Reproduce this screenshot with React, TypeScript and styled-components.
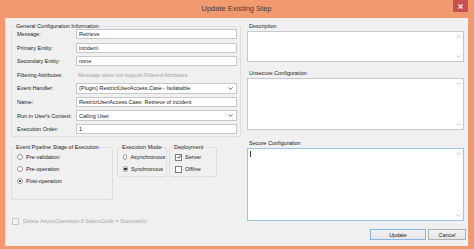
import React from 'react';
import styled, { createGlobalStyle } from 'styled-components';

const GlobalStyle = createGlobalStyle`
  html, body {
    margin: 0;
    padding: 0;
    background: #f19a70;
  }
  body {
    font-family: "Liberation Sans", Arial, sans-serif;
  }
`;

const Window = styled.div`
  width: 474px;
  height: 249px;
  background: #f19a70;
  display: flex;
  flex-direction: column;
  box-sizing: border-box;
  padding: 0 6px 3px 5px;
`;

const TitleBar = styled.div`
  height: 18px;
  display: grid;
  grid-template-columns: 1fr auto 1fr;
  align-items: start;
`;

const Title = styled.div`
  grid-column: 2;
  font-size: 7.5px;
  line-height: 18px;
  color: #4a3b34;
`;

const CloseButton = styled.div`
  grid-column: 3;
  justify-self: end;
  width: 15px;
  height: 12px;
  background: #c75050;
  display: flex;
  align-items: center;
  justify-content: center;
`;

const Client = styled.div`
  flex: 1;
  background: #f0f0f0;
  display: flex;
  padding: 5px 2px 0 6px;
  gap: 6px;
  font-size: 5.5px;
  color: #222;
`;

const LeftColumn = styled.div`
  width: 230px;
  display: flex;
  flex-direction: column;
`;

const RightColumn = styled.div`
  width: 219px;
  display: flex;
  flex-direction: column;
`;

const Group = styled.fieldset<{ $width?: number; $padBottom?: number }>`
  margin: 0;
  min-width: 0;
  box-sizing: border-box;
  width: ${(p) => (p.$width ? `${p.$width}px` : 'auto')};
  border: 1px solid #dedede;
  border-radius: 2px;
  padding: 0 3px ${(p) => p.$padBottom ?? 2}px 5px;
`;

const Legend = styled.legend`
  font-size: 5.5px;
  line-height: 6px;
  padding: 0 1px;
  margin-left: -2px;
  color: #222;
  white-space: nowrap;
`;

const FormGrid = styled.div`
  display: grid;
  grid-template-columns: 59px 161px;
  grid-auto-rows: 10px;
  row-gap: 3.6px;
  align-items: center;
`;

const FieldLabel = styled.div`
  white-space: nowrap;
`;

const TextBox = styled.div`
  height: 10px;
  box-sizing: border-box;
  border: 1px solid #c8c8c8;
  background: #fff;
  padding-left: 2px;
  display: flex;
  align-items: center;
  white-space: nowrap;
`;

const ComboBox = styled(TextBox)`
  height: 11px;
  justify-content: space-between;
  padding-right: 3px;
`;

const Muted = styled.div`
  color: #a3a3a3;
  padding-left: 2px;
  white-space: nowrap;
`;

const StageRow = styled.div`
  display: flex;
  align-items: flex-start;
  margin-top: 7px;
`;

const OptionList = styled.div`
  display: flex;
  flex-direction: column;
  gap: 2px;
  padding-top: 2px;
`;

const Option = styled.div<{ $disabled?: boolean }>`
  height: 10px;
  display: flex;
  align-items: center;
  gap: 3px;
  white-space: nowrap;
  color: ${(p) => (p.$disabled ? '#a8a8a8' : '#222')};
`;

const Radio = styled.span<{ $checked?: boolean }>`
  width: 4px;
  height: 4px;
  border: 1px solid #9a9a9a;
  border-radius: 50%;
  background: #fff;
  display: flex;
  align-items: center;
  justify-content: center;
  &::after {
    content: '';
    width: 2.4px;
    height: 2.4px;
    border-radius: 50%;
    background: ${(p) => (p.$checked ? '#1e1e1e' : 'transparent')};
  }
`;

const Check = styled.span<{ $disabled?: boolean }>`
  width: 5px;
  height: 5px;
  border: 1px solid ${(p) => (p.$disabled ? '#c8c8c8' : '#7a7a7a')};
  background: ${(p) => (p.$disabled ? '#f4f4f4' : '#fff')};
  display: flex;
  align-items: center;
  justify-content: center;
`;

const DeleteRow = styled(Option)`
  margin-top: 16px;
  padding-left: 1px;
  gap: 4px;
`;

const Section = styled.div<{ $gap: number }>`
  margin-top: ${(p) => p.$gap}px;
  display: flex;
  flex-direction: column;
`;

const SectionLabel = styled.div`
  line-height: 6px;
  margin: 0 0 2px 2px;
`;

const TextArea = styled.div<{ $height: number; $focused?: boolean }>`
  width: 217px;
  height: ${(p) => p.$height}px;
  box-sizing: border-box;
  background: #fff;
  border: 1px solid ${(p) => (p.$focused ? '#9cc3e8' : '#c8c8c8')};
  display: flex;
`;

const TextAreaBody = styled.div`
  flex: 1;
  padding: 2px 0 0 2px;
`;

const Caret = styled.div`
  width: 1px;
  height: 6px;
  background: #444;
`;

const ScrollTrack = styled.div`
  width: 9px;
  display: flex;
  flex-direction: column;
  justify-content: space-between;
  align-items: center;
  padding: 3px 0;
`;

const ButtonRow = styled.div`
  margin-top: 8px;
  display: flex;
  justify-content: flex-end;
  gap: 2px;
`;

const Button = styled.div<{ $width: number; $default?: boolean }>`
  width: ${(p) => p.$width}px;
  height: 11px;
  box-sizing: border-box;
  border: 1px solid ${(p) => (p.$default ? '#86b6e2' : '#b0b0b0')};
  background: linear-gradient(#f3f3f3, #e6e6e6);
  display: flex;
  align-items: center;
  justify-content: center;
  font-size: 5.5px;
  color: #222;
`;

const Chevron = ({ up, color = '#b4b4b4' }: { up?: boolean; color?: string }) => (
  <svg width="5" height="3" viewBox="0 0 5 3">
    <path
      d={up ? 'M0.5 2.6 L2.5 0.6 L4.5 2.6' : 'M0.5 0.4 L2.5 2.4 L4.5 0.4'}
      fill="none"
      stroke={color}
      strokeWidth="0.8"
    />
  </svg>
);

const CheckMark = () => (
  <svg width="4" height="4" viewBox="0 0 4 4">
    <path d="M0.4 2 L1.5 3.2 L3.6 0.6" fill="none" stroke="#222" strokeWidth="0.9" />
  </svg>
);

const fields: { label: string; value: string; kind: 'text' | 'combo' | 'muted' }[] = [
  { label: 'Message:', value: 'Retrieve', kind: 'text' },
  { label: 'Primary Entity:', value: 'incident', kind: 'text' },
  { label: 'Secondary Entity:', value: 'none', kind: 'text' },
  { label: 'Filtering Attributes:', value: 'Message does not support Filtered Attributes', kind: 'muted' },
  { label: 'Event Handler:', value: '(Plugin) RestrictUserAccess.Case - Isolatable', kind: 'combo' },
  { label: 'Name:', value: 'RestrictUserAccess.Case: Retrieve of incident', kind: 'text' },
  { label: "Run in User's Context:", value: 'Calling User', kind: 'combo' },
  { label: 'Execution Order:', value: '1', kind: 'text' },
];

const ScrollArea = ({ height, focused }: { height: number; focused?: boolean }) => (
  <TextArea $height={height} $focused={focused}>
    <TextAreaBody>{focused && <Caret />}</TextAreaBody>
    <ScrollTrack>
      <Chevron up />
      <Chevron />
    </ScrollTrack>
  </TextArea>
);

export default function App() {
  return (
    <>
      <GlobalStyle />
      <Window>
        <TitleBar>
          <Title>Update Existing Step</Title>
          <CloseButton>
            <svg width="5" height="5" viewBox="0 0 5 5">
              <path d="M0.5 0.5 L4.5 4.5 M4.5 0.5 L0.5 4.5" stroke="#fff" strokeWidth="1.1" />
            </svg>
          </CloseButton>
        </TitleBar>
        <Client>
          <LeftColumn>
            <Group>
              <Legend>General Configuration Information</Legend>
              <FormGrid>
                {fields.map((f) => (
                  <React.Fragment key={f.label}>
                    <FieldLabel>{f.label}</FieldLabel>
                    {f.kind === 'text' && <TextBox>{f.value}</TextBox>}
                    {f.kind === 'muted' && <Muted>{f.value}</Muted>}
                    {f.kind === 'combo' && (
                      <ComboBox>
                        <span>{f.value}</span>
                        <Chevron color="#444" />
                      </ComboBox>
                    )}
                  </React.Fragment>
                ))}
              </FormGrid>
            </Group>

            <StageRow>
              <Group $width={102} $padBottom={13}>
                <Legend>Event Pipeline Stage of Execution</Legend>
                <OptionList>
                  <Option><Radio />Pre-validation</Option>
                  <Option><Radio />Pre-operation</Option>
                  <Option><Radio $checked />Post-operation</Option>
                </OptionList>
              </Group>
              <Group $width={50} style={{ marginLeft: 4 }}>
                <Legend>Execution Mode</Legend>
                <OptionList>
                  <Option><Radio />Asynchronous</Option>
                  <Option><Radio $checked />Synchronous</Option>
                </OptionList>
              </Group>
              <Group $width={48} style={{ marginLeft: 2 }}>
                <Legend>Deployment</Legend>
                <OptionList>
                  <Option><Check><CheckMark /></Check>Server</Option>
                  <Option><Check />Offline</Option>
                </OptionList>
              </Group>
            </StageRow>

            <DeleteRow $disabled>
              <Check $disabled />
              Delete AsyncOperation if StatusCode = Successful
            </DeleteRow>
          </LeftColumn>

          <RightColumn>
            <Section $gap={0}>
              <SectionLabel>Description</SectionLabel>
              <ScrollArea height={31} />
            </Section>
            <Section $gap={8}>
              <SectionLabel>Unsecure Configuration</SectionLabel>
              <ScrollArea height={52} />
            </Section>
            <Section $gap={10}>
              <SectionLabel>Secure Configuration</SectionLabel>
              <ScrollArea height={73} focused />
            </Section>
            <ButtonRow>
              <Button $width={56} $default>Update</Button>
              <Button $width={38}>Cancel</Button>
            </ButtonRow>
          </RightColumn>
        </Client>
      </Window>
    </>
  );
}
